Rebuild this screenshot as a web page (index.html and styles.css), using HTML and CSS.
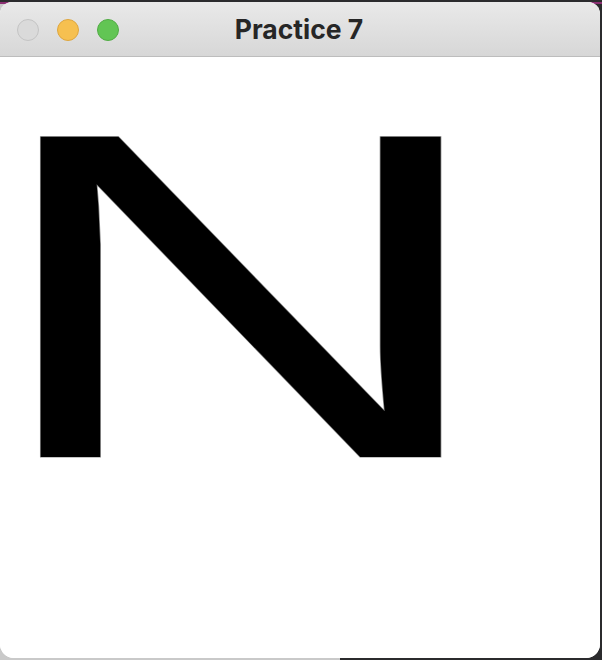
FILE: index.html
```html
<!DOCTYPE html>
<html><head><meta charset="utf-8"><link rel="stylesheet" href="styles.css"></head>
<body>
<div class="desk">
  <div class="window">
    <div class="titlebar">
      <div class="lights">
        <span class="light light-close"></span>
        <span class="light light-min"></span>
        <span class="light light-max"></span>
      </div>
      <div class="title">Practice 7</div>
      <div class="spacer"></div>
    </div>
    <div class="canvas">
      <span class="glyph">N</span>
    </div>
  </div>
</div>
</body></html>
```
FILE: styles.css
```css
html,body{margin:0;padding:0;}
body{width:602px;height:660px;overflow:hidden;background:#2b2b2d;}
.desk{width:602px;height:660px;background:linear-gradient(#8b2f72 0,#8b2f72 2px,transparent 2px),linear-gradient(90deg,#c9c9c9 0,#c9c9c9 340px,#2b2b2d 340px);}
.window{width:600px;height:656px;margin-top:2px;border-radius:12px 12px 14px 14px;overflow:hidden;background:#fff;display:flex;flex-direction:column;}
.titlebar{height:54px;flex:none;display:grid;grid-template-columns:1fr auto 1fr;align-items:center;padding-right:2px;background:linear-gradient(#e9e9e9,#d7d7d7);border-bottom:1px solid #bdbdbd;}
.lights{display:flex;gap:18px;padding-left:17px;padding-top:2px;}
.light{width:22px;height:22px;border-radius:50%;box-sizing:border-box;}
.light-close{background:#dadada;border:1px solid #c4c4c4;}
.light-min{background:#f6c050;border:1px solid #dea63e;}
.light-max{background:#62c554;border:1px solid #51ac44;}
.title{font-family:Inter,"Liberation Sans",sans-serif;font-weight:700;font-size:26.5px;line-height:32px;color:#262626;white-space:nowrap;}
.canvas{flex:1;background:#fff;overflow:hidden;}
.glyph{display:block;width:max-content;font-family:"Liberation Sans",Arial,sans-serif;font-weight:400;font-size:465.45px;line-height:1;color:#000;-webkit-text-stroke:1px #8a8a8a;paint-order:stroke fill;transform-origin:0 0;transform:scale(1.538,1);margin-left:-18px;margin-top:7px;}
```
